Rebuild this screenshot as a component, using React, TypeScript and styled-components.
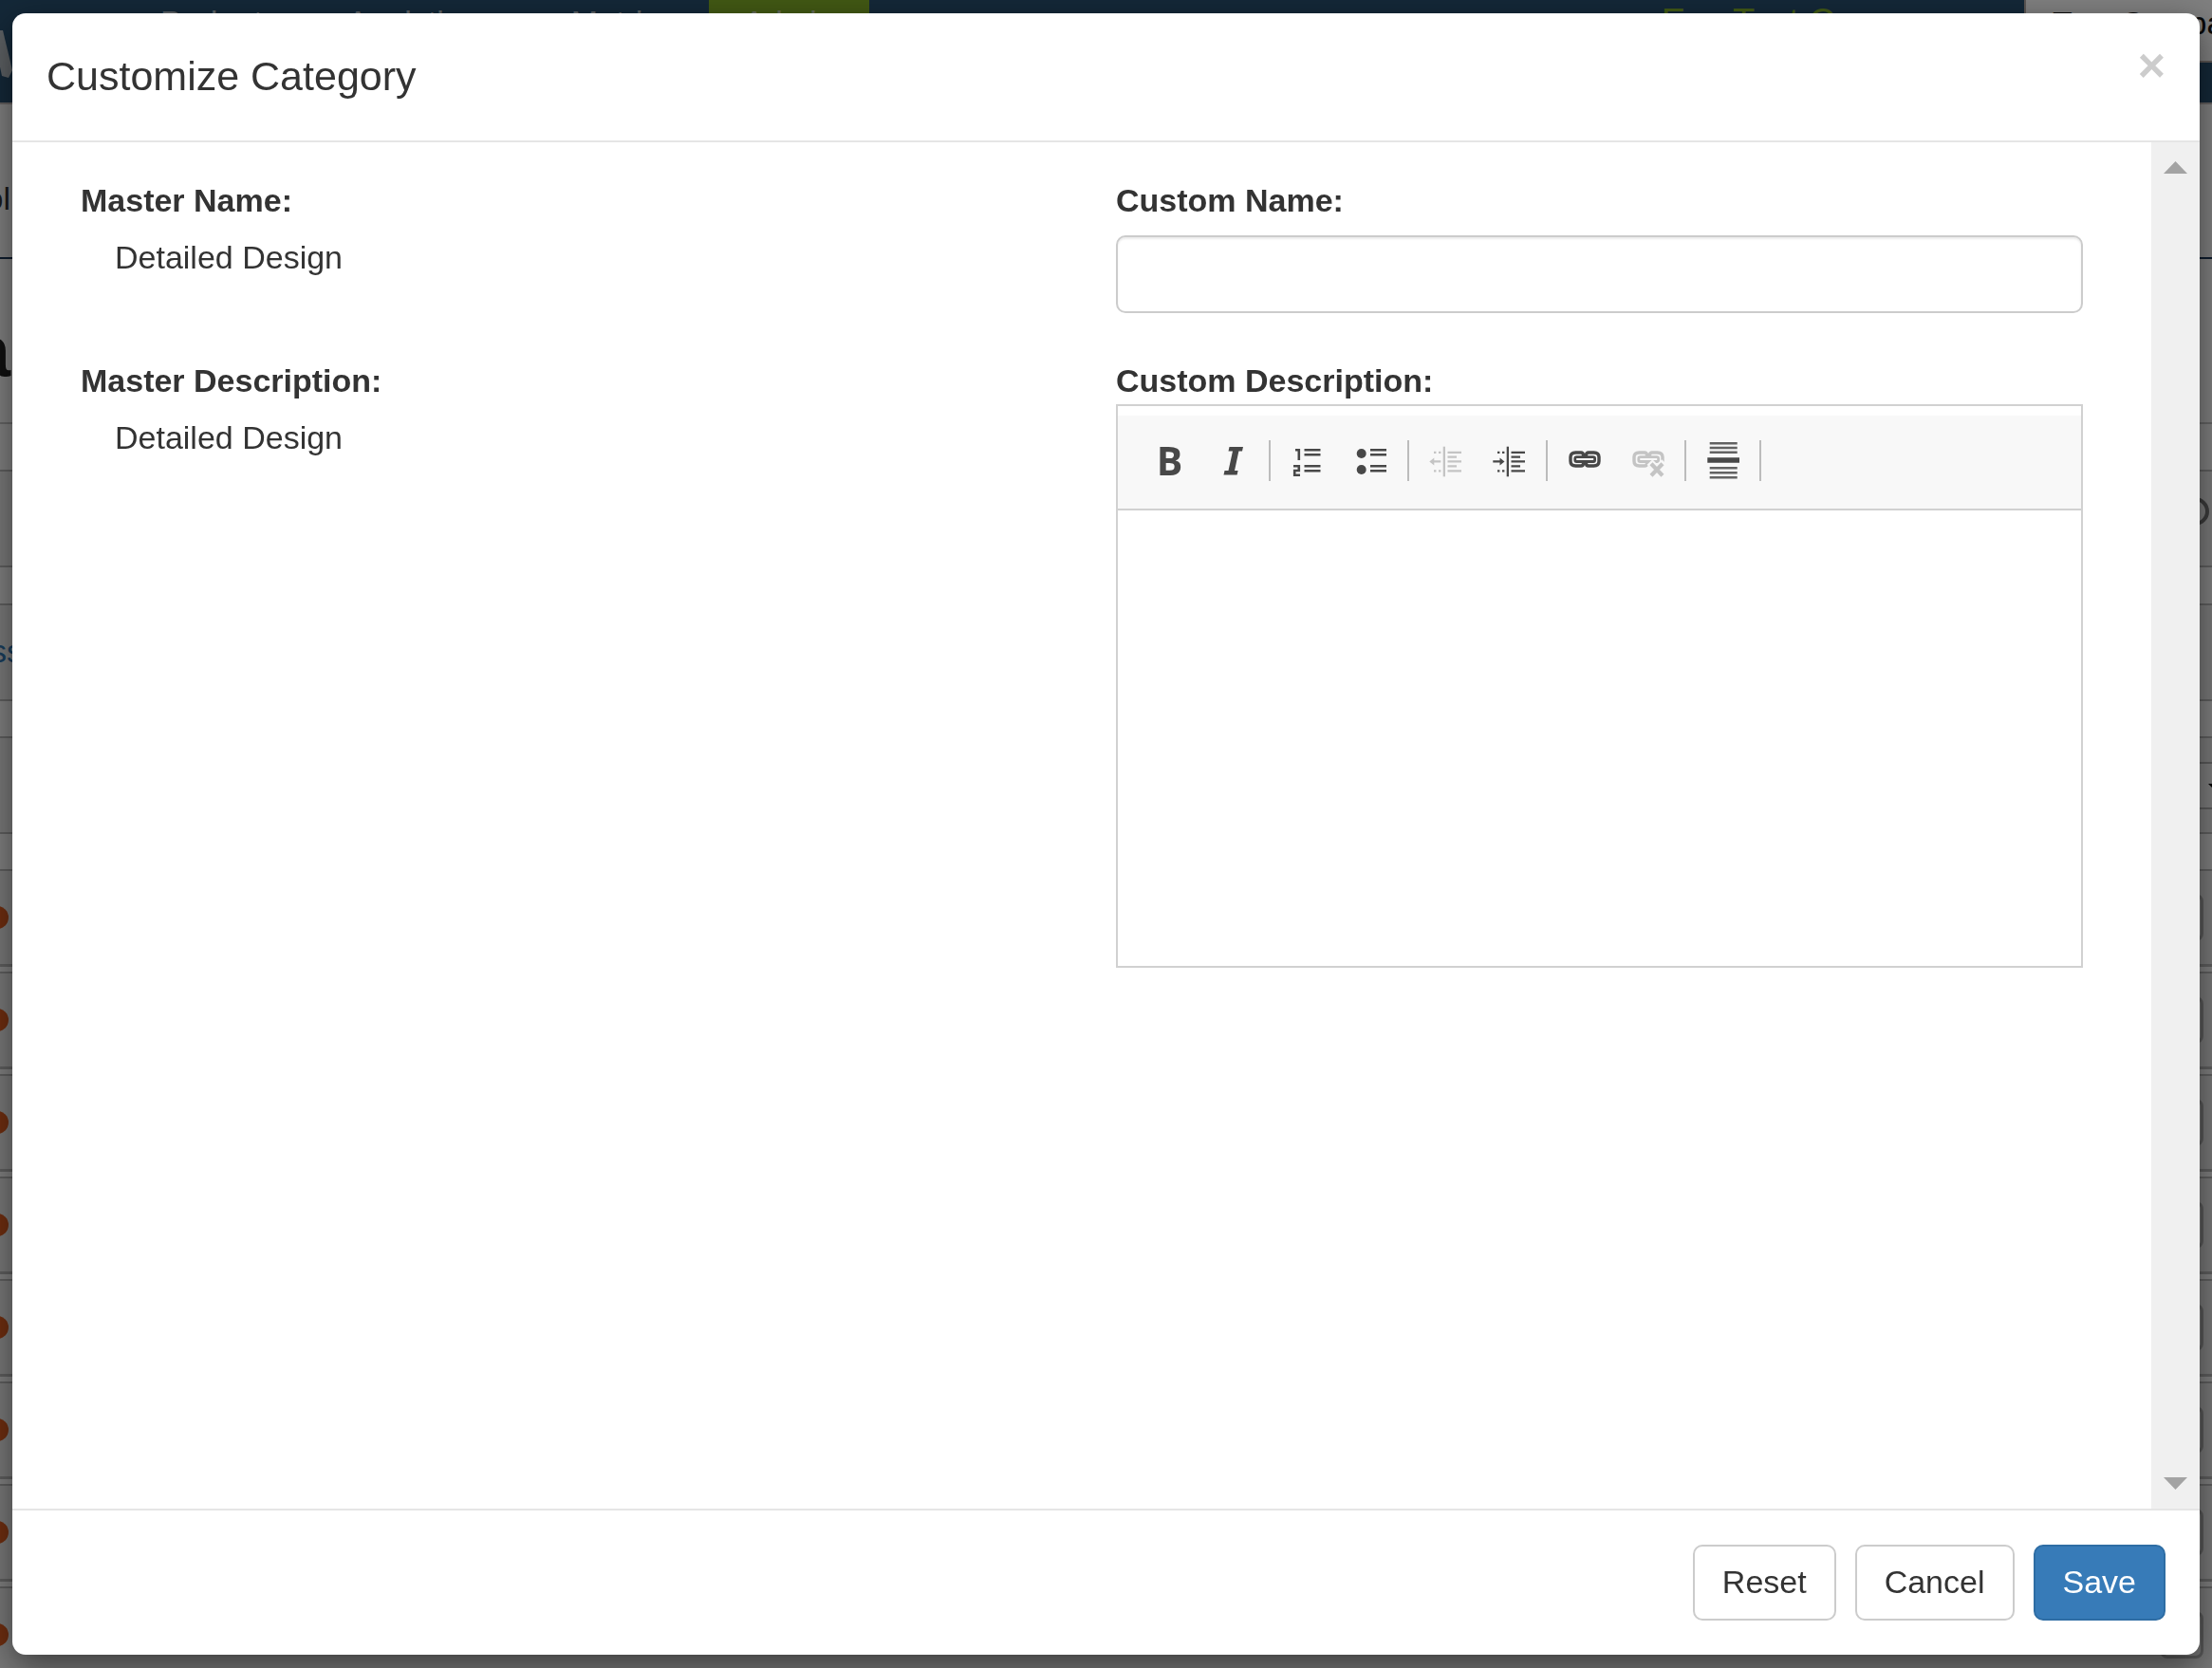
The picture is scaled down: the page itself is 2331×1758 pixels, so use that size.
import React, { useState } from 'react';
import styled, { createGlobalStyle, css } from 'styled-components';

const colors = {
  navy: '#285070',
  green: '#84b128',
  lime: '#84b32c',
  link: '#337ab7',
  primary: '#377bb8',
  text: '#333333',
  border: '#cccccc',
  editorBorder: '#d1d1d1',
  line: '#e5e5e5',
  icon: '#484848',
  iconOff: '#c4c4c4',
};

const GlobalStyle = createGlobalStyle`
  *, *::before, *::after {
    box-sizing: border-box;
  }

  body {
    margin: 0;
    color: ${colors.text};
    font-family: 'Liberation Sans', Arial, sans-serif;
    font-size: 34px;
    line-height: 50px;
  }

  button, input, textarea {
    font: inherit;
    color: inherit;
  }
`;

// Page behind the dialog
const Page = styled.div`
  height: 100vh;
  overflow: hidden;
  background: #fff;
`;

const TopBar = styled.header`
  display: flex;
  align-items: flex-start;
  height: 110px;
  overflow: hidden;
  background: ${colors.navy};
  border-bottom: 2px solid #c4bdbd;
  line-height: 46px;
`;

const LogoMark = styled.svg`
  flex: none;
  width: 133px;
  height: 108px;
`;

const NavItem = styled.a<{ $active?: boolean; $menu?: boolean }>`
  flex: none;
  height: 92px;
  padding: 0 ${({ $menu }) => ($menu ? 64 : 36)}px 0 36px;
  color: ${({ $active }) => ($active ? '#c8d4b4' : '#b8c4cc')};
  background: ${({ $active }) => ($active ? colors.green : 'transparent')};
  text-decoration: none;
`;

const Account = styled.span`
  flex: 1;
  padding-right: 64px;
  color: ${colors.lime};
  font-size: 38px;
  text-align: right;
  white-space: nowrap;
`;

const CompanyBox = styled.div`
  flex: none;
  width: 198px;
  height: 66px;
  padding: 0 0 0 28px;
  overflow: hidden;
  background: #fff;
  border: solid #b5aaa5;
  border-width: 0 0 2px 2px;
  line-height: 48px;
  color: #111;
  white-space: nowrap;
`;

const SubNav = styled.div`
  display: flex;
  align-items: center;
  height: 163px;
  padding-top: 36px;
  border-bottom: 2px solid #1d3a5c;
`;

const Heading = styled.div`
  display: flex;
  align-items: center;
  height: 172px;
  padding-top: 22px;
  color: #222;
  font-size: 76px;
  font-weight: bold;
`;

const Spacer = styled.div<{ $size: number; $ruled?: boolean }>`
  height: ${({ $size }) => $size}px;
  border-top: ${({ $ruled }) => ($ruled ? '2px solid #c8c8c8' : '0')};
`;

const Strip = styled.div`
  display: flex;
  align-items: center;
  justify-content: space-between;
  height: 103px;
  background: #f2f2f2;
  border: solid #bdbdbd;
  border-width: 2px 0;
`;

const ListRow = styled(Strip)`
  margin-bottom: 5px;
  background: #f0f0f0;
  border-bottom-width: 3px;
`;

// Only the tail of each left hand label is on screen
const Gutter = styled.span`
  display: flex;
  justify-content: flex-end;
  width: 11px;
`;

const LinkGutter = styled(Gutter)`
  width: 24px;
  padding-bottom: 4px;
  color: ${colors.link};
`;

const Dot = styled.i`
  flex: none;
  width: 24px;
  height: 24px;
  border-radius: 50%;
  background: #dd5c20;
`;

const DotGutter = styled(Gutter)`
  width: 9px;
`;

const RowButton = styled.span`
  width: 46px;
  height: 50px;
  margin-right: 9px;
  border: 3px solid #b4b4b4;
  border-radius: 8px;
`;

const MenuButton = styled.span`
  display: flex;
  align-items: center;
  justify-content: flex-end;
  width: 36px;
  height: 50px;
  background: #f8f8f8;
  border: 2px solid #b4b4b4;
  border-right: 0;
  border-radius: 8px 0 0 8px;

  svg {
    width: 4px;
    height: 4px;
  }
`;

const InfoIcon = styled.svg`
  width: 32px;
  height: 32px;
  margin: 0 2px 16px 0;
`;

// Dialog
const Backdrop = styled.div`
  position: fixed;
  inset: 0;
  padding: 14px 13px;
  background: rgba(0, 0, 0, 0.5);
`;

const Dialog = styled.div`
  display: flex;
  flex-direction: column;
  height: 100%;
  overflow: hidden;
  background: #fff;
  border-radius: 14px;
  box-shadow: 0 12px 36px rgba(0, 0, 0, 0.5);
`;

const DialogHeader = styled.div`
  display: flex;
  align-items: flex-start;
  justify-content: space-between;
  padding: 35px 36px 37px;
  border-bottom: 2px solid ${colors.line};
`;

const Title = styled.h4`
  margin: 0;
  font-size: 43px;
  font-weight: normal;
  line-height: 62px;
`;

const CloseButton = styled.button`
  padding: 0;
  background: none;
  border: 0;
  color: ${colors.border};
  font-size: 50px;
  font-weight: bold;
  line-height: 40px;
  cursor: pointer;
`;

const DialogBody = styled.div`
  display: flex;
  flex: 1;
  min-height: 0;
`;

const Form = styled.form`
  display: grid;
  flex: 1;
  grid-template-columns: 1fr 1fr;
  grid-auto-rows: max-content;
  column-gap: 72px;
  row-gap: 46px;
  min-width: 0;
  padding: 36px 72px;
  overflow: hidden;
`;

const labelStyle = css`
  display: block;
  margin: 0;
  font-weight: bold;
`;

const Term = styled.div`
  ${labelStyle}
`;

const Label = styled.label`
  ${labelStyle}
`;

const Value = styled.div`
  padding: 10px 36px 0;
`;

const TextInput = styled.input`
  display: block;
  width: 100%;
  height: 82px;
  margin-top: 12px;
  padding: 14px 28px;
  border: 2px solid ${colors.border};
  border-radius: 10px;
  box-shadow: inset 0 2px 2px rgba(0, 0, 0, 0.08);
  outline: 0;
`;

const Editor = styled.div`
  padding-top: 10px;
  border: 2px solid ${colors.editorBorder};
`;

const Toolbar = styled.div`
  display: flex;
  align-items: center;
  height: 100px;
  padding: 0 21px 3px;
  background: #f8f8f8;
  border-bottom: 2px solid ${colors.editorBorder};
`;

const ToolGroup = styled.div`
  display: flex;
  align-items: center;

  &::after {
    content: '';
    width: 2px;
    height: 43px;
    margin: 0 6px 0 4px;
    background: #bcbcbc;
  }
`;

const ToolButton = styled.button`
  display: flex;
  align-items: center;
  justify-content: center;
  width: 67px;
  height: 67px;
  padding: 0;
  background: none;
  border: 0;
  color: ${colors.icon};
  cursor: pointer;

  &:disabled {
    color: ${colors.iconOff};
    cursor: default;
  }
`;

const BoldGlyph = styled.span`
  font-family: 'Open Sans', sans-serif;
  font-size: 41px;
  font-weight: bold;
  line-height: 65px;
`;

const IconSvg = styled.svg`
  width: 39px;
  height: 39px;
  fill: currentColor;
`;

const EditorText = styled.textarea`
  display: block;
  width: 100%;
  height: 480px;
  padding: 24px;
  border: 0;
  outline: 0;
  resize: none;
`;

const ScrollRail = styled.div`
  display: flex;
  flex-direction: column;
  justify-content: space-between;
  width: 51px;
  background: #f0f0f0;
`;

const ScrollButton = styled.button`
  height: 53px;
  padding: 0;
  background: none;
  border: 0;
  line-height: 0;

  svg {
    width: 25px;
    height: 13px;
    fill: #a3a3a3;
  }
`;

const DialogFooter = styled.div`
  display: flex;
  justify-content: flex-end;
  gap: 20px;
  padding: 36px;
  border-top: 2px solid ${colors.line};
`;

const Button = styled.button<{ $primary?: boolean }>`
  height: 80px;
  padding: 0 29px 2px;
  background: ${({ $primary }) => ($primary ? colors.primary : '#fff')};
  border: 2px solid ${({ $primary }) => ($primary ? '#2e6da4' : colors.border)};
  border-radius: 10px;
  color: ${({ $primary }) => ($primary ? '#fff' : colors.text)};
  cursor: pointer;
`;

const ItalicIcon = () => (
  <IconSvg viewBox="0 0 39 39" aria-hidden>
    <path d="M15.5 5H30l-1 4.5h-3.6L21 30h3.6l-1 4.5H9.5l1-4.5h4L19 9.5h-4.5z" />
  </IconSvg>
);

const NumberedIcon = () => (
  <IconSvg viewBox="0 0 39 39" aria-hidden>
    <path d="M15.5 7h17v2.5h-17zM15.5 12h17v2.5h-17zM15.5 24h17v2.5h-17zM15.5 29h17v2.5h-17z" />
    <path
      d="M6 8.200h3.800V19M4 25.200h5.800v4.800H5.200v4.800h5.800"
      fill="none"
      stroke="currentColor"
      strokeWidth="2.6"
    />
  </IconSvg>
);

const BulletedIcon = () => (
  <IconSvg viewBox="0 0 39 39" aria-hidden>
    <circle cx="8.7" cy="12" r="5" />
    <circle cx="8.7" cy="29" r="5" />
    <path d="M18 7h17v2.5H18zM18 12h17v2.5H18zM18 24h17v2.5H18zM18 29h17v2.5H18z" />
  </IconSvg>
);

const IndentIcon = ({ out }: { out?: boolean }) => (
  <IconSvg viewBox="0 0 39 39" aria-hidden>
    <path d="M15.7 4.7H18v31.6h-2.3z" />
    <path d="M20.5 9.7H35V12H20.5zM20.5 14.5H30v2.3h-9.5zM20.5 19.3H35v2.3H20.5zM20.5 24.3H30v2.3h-9.5zM20.5 29.3H35v2.3H20.5z" />
    <path d="M6 9.700h2.400V12H6zM11 9.700h2.400V12H11zM6 29.300h2.400v2.300H6zM11 29.300h2.400v2.300H11z" />
    {out ? (
      <path d="M1.300 20.400l5-4v2.900h7v2.300h-7v2.900z" />
    ) : (
      <path d="M13.500 20.400l-5-4v2.900H1.300v2.300h7.200v2.900z" />
    )}
  </IconSvg>
);

const LinkIcon = ({ broken }: { broken?: boolean }) => (
  <IconSvg viewBox="0 0 39 39" aria-hidden>
    <g fill="none" stroke="currentColor" strokeWidth="3.4">
      <path d="M17.500 15v-1.500q0-2.500-2.500-2.500H9.500Q4 11 4 16v4q0 5 5.500 5H15q2.500 0 2.500-2.500V21" />
      <path d="M20.500 15v-1.500q0-2.500 2.500-2.500h5.500q5.500 0 5.500 5v4q0 5-5.500 5H23q-2.500 0-2.500-2.500V21" />
      <rect x="8.800" y="15.700" width="20.800" height="4.800" rx="1.500" strokeWidth="2.800" />
    </g>
    {broken && (
      <g fill="none">
        <path d="M20.500 21l14.500 14.500M36 21L20.500 36" stroke="#f8f8f8" strokeWidth="8" />
        <path d="M22 22.800l12 12.400M34 22.800L22 35.200" stroke="currentColor" strokeWidth="4.200" />
      </g>
    )}
  </IconSvg>
);

const RuleIcon = () => (
  <IconSvg viewBox="0 0 39 39" aria-hidden>
    <path d="M2.300 16.300H36v5.400H2.300z" />
    <path
      d="M4.700 0h29v2.400h-29zM4.700 4.800h29v2.400h-29zM4.700 9.600h29V12h-29zM4.700 26h29v2.400h-29zM4.700 31h29v2.400h-29zM4.700 36h29v2.400h-29z"
      opacity="0.85"
    />
  </IconSvg>
);

const rows = [1, 2, 3, 4, 5, 6, 7, 8];

const BackgroundPage: React.FC = () => (
  <Page aria-hidden>
    <TopBar>
      <LogoMark viewBox="0 0 133 108">
        <path d="M-8 32H3l10 42-4 8-7-2z" fill="#b9c0c6" />
      </LogoMark>
      <NavItem href="#">Budgets</NavItem>
      <NavItem href="#" $menu>Analytics</NavItem>
      <NavItem href="#">Metrics</NavItem>
      <NavItem href="#" $active>Admin</NavItem>
      <Account>Eco Test Company</Account>
      <CompanyBox>Test Company</CompanyBox>
    </TopBar>
    <SubNav>
      <Gutter>ol</Gutter>
    </SubNav>
    <Heading>
      <Gutter>a</Gutter>
    </Heading>
    <Spacer $size={50} $ruled />
    <Strip>
      <span />
      <InfoIcon viewBox="0 0 32 32" fill="none" stroke="#777" strokeWidth="4">
        <circle cx="16" cy="16" r="13" />
        <path d="M18 10v4M18 18v4" />
      </InfoIcon>
    </Strip>
    <Spacer $size={38} />
    <Strip>
      <LinkGutter>ss</LinkGutter>
    </Strip>
    <Spacer $size={37} />
    <Strip>
      <span />
      <MenuButton>
        <svg viewBox="0 0 4 4"><path d="M0 0h4v4z" /></svg>
      </MenuButton>
    </Strip>
    <Spacer $size={37} />
    {rows.map((row) => (
      <ListRow key={row}>
        <DotGutter>
          <Dot />
        </DotGutter>
        <RowButton />
      </ListRow>
    ))}
  </Page>
);

const App: React.FC = () => {
  const [name, setName] = useState('');
  const [description, setDescription] = useState('');

  const reset = () => {
    setName('');
    setDescription('');
  };

  return (
    <>
      <GlobalStyle />
      <BackgroundPage />

      <Backdrop>
        <Dialog role="dialog" aria-modal="true" aria-labelledby="dialog-title">
          <DialogHeader>
            <Title id="dialog-title">Customize Category</Title>
            <CloseButton type="button" aria-label="Close">×</CloseButton>
          </DialogHeader>

          <DialogBody>
            <Form id="category-form" onSubmit={(e) => e.preventDefault()}>
              <div>
                <Term>Master Name:</Term>
                <Value>Detailed Design</Value>
              </div>
              <div>
                <Label htmlFor="custom-name">Custom Name:</Label>
                <TextInput
                  id="custom-name"
                  type="text"
                  value={name}
                  onChange={(e) => setName(e.target.value)}
                />
              </div>
              <div>
                <Term>Master Description:</Term>
                <Value>Detailed Design</Value>
              </div>
              <div>
                <Label htmlFor="custom-description">Custom Description:</Label>
                <Editor>
                  <Toolbar role="toolbar" aria-label="Editor toolbar">
                    <ToolGroup>
                      <ToolButton type="button" aria-label="Bold">
                        <BoldGlyph>B</BoldGlyph>
                      </ToolButton>
                      <ToolButton type="button" aria-label="Italic">
                        <ItalicIcon />
                      </ToolButton>
                    </ToolGroup>
                    <ToolGroup>
                      <ToolButton type="button" aria-label="Numbered list">
                        <NumberedIcon />
                      </ToolButton>
                      <ToolButton type="button" aria-label="Bulleted list">
                        <BulletedIcon />
                      </ToolButton>
                    </ToolGroup>
                    <ToolGroup>
                      <ToolButton type="button" aria-label="Decrease indent" disabled>
                        <IndentIcon out />
                      </ToolButton>
                      <ToolButton type="button" aria-label="Increase indent">
                        <IndentIcon />
                      </ToolButton>
                    </ToolGroup>
                    <ToolGroup>
                      <ToolButton type="button" aria-label="Link">
                        <LinkIcon />
                      </ToolButton>
                      <ToolButton type="button" aria-label="Unlink" disabled>
                        <LinkIcon broken />
                      </ToolButton>
                    </ToolGroup>
                    <ToolGroup>
                      <ToolButton type="button" aria-label="Horizontal line">
                        <RuleIcon />
                      </ToolButton>
                    </ToolGroup>
                  </Toolbar>
                  <EditorText
                    id="custom-description"
                    value={description}
                    onChange={(e) => setDescription(e.target.value)}
                  />
                </Editor>
              </div>
            </Form>

            <ScrollRail>
              <ScrollButton type="button" aria-label="Scroll up">
                <svg viewBox="0 0 25 13"><path d="M12.5 0L25 13H0z" /></svg>
              </ScrollButton>
              <ScrollButton type="button" aria-label="Scroll down">
                <svg viewBox="0 0 25 13"><path d="M0 0h25L12.5 13z" /></svg>
              </ScrollButton>
            </ScrollRail>
          </DialogBody>

          <DialogFooter>
            <Button type="button" onClick={reset}>Reset</Button>
            <Button type="button">Cancel</Button>
            <Button type="submit" form="category-form" $primary>Save</Button>
          </DialogFooter>
        </Dialog>
      </Backdrop>
    </>
  );
};

export default App;
